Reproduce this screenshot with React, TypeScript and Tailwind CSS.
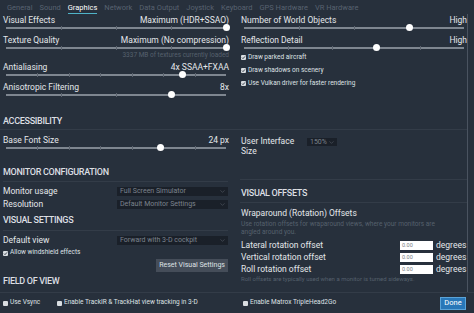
import { ChevronDown } from 'lucide-react';

const tabs = ['General', 'Sound', 'Graphics', 'Network', 'Data Output', 'Joystick', 'Keyboard', 'GPS Hardware', 'VR Hardware'];

function Slider({ pos, ticks = 4 }: { pos: number; ticks?: number }) {
  return (
    <div className="h-[6px] flex items-center px-[3px]">
      <div className="relative w-full h-[2px] bg-[#7e8690]">
        {Array.from({ length: ticks - 1 }).map((_, i) => (
          <div
            key={i}
            className="absolute top-[-1px] w-px h-[4px] bg-[#5b636e]"
            style={{ left: `${((i + 1) / ticks) * 100}%` }}
          />
        ))}
        <div
          className="absolute top-[-3px] w-[7px] h-[7px] -ml-[3.5px] rounded-full bg-white"
          style={{ left: `${pos}%` }}
        />
      </div>
    </div>
  );
}

function SliderRow({ label, value, pos, ticks }: { label: string; value: string; pos: number; ticks?: number }) {
  return (
    <div>
      <div className="h-[10px] flex items-center justify-between whitespace-nowrap text-[8.5px] leading-[10px] text-[#e4e7ea]">
        <span>{label}</span>
        <span>{value}</span>
      </div>
      <Slider pos={pos} ticks={ticks} />
    </div>
  );
}

function Check({ label, checked = true }: { label: string; checked?: boolean }) {
  return (
    <div className="flex items-center gap-[2px] whitespace-nowrap text-[6.5px] text-[#dfe2e6]">
      <div className="w-[5px] h-[5px] bg-[#d9dde1] flex items-center justify-center rounded-[1px]">
        {checked && (
          <svg viewBox="0 0 10 10" className="w-[5px] h-[5px]">
            <path d="M2 5.2l2 2 4-4.4" stroke="#2a323d" strokeWidth="1.8" fill="none" />
          </svg>
        )}
      </div>
      <span>{label}</span>
    </div>
  );
}

function Dropdown({ text, className }: { text: string; className: string }) {
  return (
    <div className={`flex items-center justify-between whitespace-nowrap bg-[#1a2029] text-[#7c838d] text-[7px] pl-[3px] pr-[2px] ${className}`}>
      <span>{text}</span>
      <ChevronDown size={7} strokeWidth={1.5} className="text-[#6a717b]" />
    </div>
  );
}

function Heading({ text }: { text: string }) {
  return <span className="text-[9px] font-medium tracking-[-0.3px] whitespace-nowrap text-[#dcdfe3]">{text}</span>;
}

function OffsetRow({ label }: { label: string }) {
  return (
    <div className="h-[12px] flex items-center justify-between text-[8.5px] text-[#e4e7ea]">
      <span>{label}</span>
      <div className="flex items-center gap-[3px]">
        <div className="w-[33px] h-[9px] bg-white text-[5.5px] text-[#7a7f86] flex items-center pl-[2px]">0.00</div>
        <span className="w-[31px]">degrees</span>
      </div>
    </div>
  );
}

export default function App() {
  return (
    <div className="w-[474px] h-[313px] bg-[#27303c] overflow-hidden font-['Roboto',sans-serif] select-none">
      <div className="h-[14px] flex items-end gap-[7px] pl-[7px] text-[7.5px] text-[#586270]">
        {tabs.map((t) => (
          <span
            key={t}
            className={`leading-[10px] whitespace-nowrap border-b ${t === 'Graphics' ? 'text-white border-[#4fb3c8]' : 'border-transparent'}`}
          >
            {t}
          </span>
        ))}
      </div>

      <div className="w-[468px] border-r border-[#4a5360]">
        <div className="grid grid-cols-[234px_234px] h-[101px] pt-[1px]">
          <div className="pl-[3px] pr-[5px] flex flex-col">
            <SliderRow label="Visual Effects" value="Maximum (HDR+SSAO)" pos={100} />
            <div className="mt-[4px]">
              <SliderRow label="Texture Quality" value="Maximum (No compression)" pos={100} />
            </div>
            <div className="h-[8px] text-right whitespace-nowrap text-[6.5px] leading-[8px] text-[#56606d]">3337 MB of textures currently loaded</div>
            <div className="mt-[3px]">
              <SliderRow label="Antialiasing" value="4x SSAA+FXAA" pos={80} ticks={7} />
            </div>
            <div className="mt-[4px]">
              <SliderRow label="Anisotropic Filtering" value="8x" pos={75} />
            </div>
          </div>
          <div className="pl-[7px] pr-[1px] flex flex-col">
            <SliderRow label="Number of World Objects" value="High" pos={75} />
            <div className="mt-[4px]">
              <SliderRow label="Reflection Detail" value="High" pos={60} ticks={5} />
            </div>
            <div className="h-[13px] flex items-center"><Check label="Draw parked aircraft" /></div>
            <div className="h-[13px] flex items-center"><Check label="Draw shadows on scenery" /></div>
            <div className="h-[13px] flex items-center"><Check label="Use Vulkan driver for faster rendering" /></div>
          </div>
        </div>

        <div className="h-[15px] pl-[3px] flex items-center border-b border-[#333c48]">
          <Heading text="ACCESSIBILITY" />
        </div>

        <div className="grid grid-cols-[234px_234px] h-[30px] pt-[5px]">
          <div className="pl-[3px] pr-[5px]">
            <SliderRow label="Base Font Size" value="24 px" pos={70} ticks={7} />
          </div>
          <div className="pl-[7px] flex items-start">
            <div className="w-[66px] text-[8.5px] leading-[10px] text-[#e4e7ea] pt-[1px]">
              User Interface<br />Size
            </div>
            <Dropdown text="150%" className="w-[30px] h-[8px] mt-[3px] text-[6.5px]" />
          </div>
        </div>

        <div className="grid grid-cols-[237px_231px] h-[132px]">
          <div className="pl-[3px] pr-[9px] flex flex-col">
            <div className="h-[22px] shrink-0 flex items-end pb-[2px] border-b border-[#333c48]">
              <Heading text="MONITOR CONFIGURATION" />
            </div>
            <div className="h-[13px] shrink-0 mt-[3px] flex items-center text-[8.5px] text-[#e4e7ea]">
              <span className="w-[114px]">Monitor usage</span>
              <Dropdown text="Full Screen Simulator" className="flex-1 h-[9px]" />
            </div>
            <div className="h-[13px] shrink-0 flex items-center text-[8.5px] text-[#e4e7ea]">
              <span className="w-[114px]">Resolution</span>
              <Dropdown text="Default Monitor Settings" className="flex-1 h-[9px]" />
            </div>
            <div className="h-[20px] shrink-0 flex items-center border-b border-[#333c48]">
              <Heading text="VISUAL SETTINGS" />
            </div>
            <div className="h-[13px] shrink-0 mt-[3px] flex items-center text-[8.5px] text-[#e4e7ea]">
              <span className="w-[114px]">Default view</span>
              <Dropdown text="Forward with 3-D cockpit" className="flex-1 h-[9px]" />
            </div>
            <div className="h-[12px] shrink-0 flex items-center"><Check label="Allow windshield effects" /></div>
            <div className="flex justify-end shrink-0">
              <div className="h-[13px] px-[3px] flex items-center bg-[#454d59] text-[7px] text-[#dfe2e6]">Reset Visual Settings</div>
            </div>
            <div className="h-[20px] shrink-0 flex items-center">
              <Heading text="FIELD OF VIEW" />
            </div>
          </div>
          <div className="flex flex-col pr-[1px] pl-[3px]">
            <div className="h-[20px] shrink-0 border-b border-[#333c48]" />
            <div className="h-[23px] shrink-0 flex items-center pt-[5px] border-b border-[#333c48] pl-[1px]">
              <Heading text="VISUAL OFFSETS" />
            </div>
            <div className="pl-[1px]">
              <div className="h-[12px] mt-[4px] flex items-center text-[8.5px] text-[#e4e7ea]">Wraparound (Rotation) Offsets</div>
              <div className="text-[6.5px] leading-[8px] whitespace-nowrap text-[#56606d] mt-[1px]">
                Use rotation offsets for wraparound views, where your monitors are
                <br />
                angled around you.
              </div>
              <div className="mt-[3px]">
                <OffsetRow label="Lateral rotation offset" />
                <OffsetRow label="Vertical rotation offset" />
                <OffsetRow label="Roll rotation offset" />
              </div>
              <div className="text-[6px] leading-[8px] whitespace-nowrap text-[#56606d]">Roll offsets are typically used when a monitor is turned sideways.</div>
            </div>
          </div>
        </div>
      </div>

      <div className="h-[21px] border-t border-[#333c48] flex items-center pl-[3px] pr-[8px]">
        <div className="w-[54px]"><Check label="Use Vsync" checked={false} /></div>
        <div className="w-[186px]"><Check label="Enable TrackIR & TrackHat view tracking in 3-D" checked={false} /></div>
        <Check label="Enable Matrox TripleHead2Go" checked={false} />
        <div className="ml-auto w-[26px] h-[13px] bg-[#2877b8] border border-[#5aa3d8] text-white text-[7.5px] flex items-center justify-center">Done</div>
      </div>
    </div>
  );
}
